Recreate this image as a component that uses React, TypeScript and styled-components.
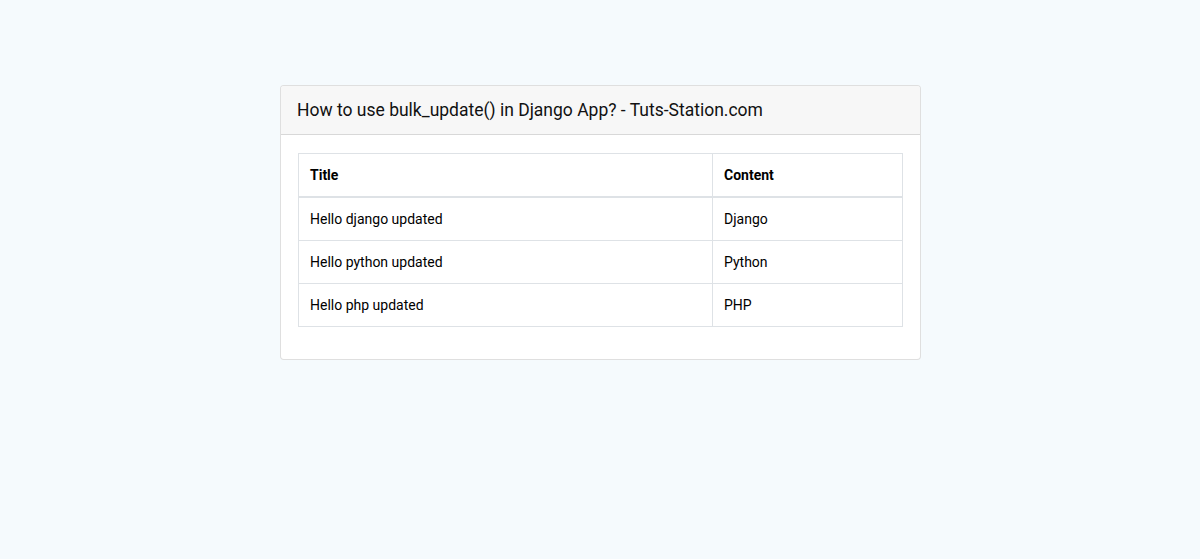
import React from "react";
import styled, { createGlobalStyle } from "styled-components";

const Global = createGlobalStyle`
  html, body { margin: 0; padding: 0; }
  body {
    background: #f5fafd;
    font-family: Roboto, "Liberation Sans", Arial, sans-serif;
    color: #000;
    min-height: 559px;
  }
`;

const Page = styled.div`
  display: flex;
  justify-content: center;
  padding-top: 85px;
  padding-left: 1px;
`;

const Card = styled.div`
  width: 641px;
  box-sizing: border-box;
  background: #fff;
  border: 1px solid rgba(0, 0, 0, 0.125);
  border-radius: 4px;
  display: flex;
  flex-direction: column;
`;

const CardHeader = styled.div`
  background: #f7f7f7;
  border-bottom: 1px solid rgba(0, 0, 0, 0.125);
  padding: 0 16px;
  height: 48px;
  display: flex;
  align-items: center;
  font-size: 17.5px;
  color: #111;
  border-radius: 3px 3px 0 0;
`;

const CardBody = styled.div`
  padding: 18px 17px 32px;
`;

const Table = styled.table`
  width: 100%;
  border-collapse: collapse;
  font-size: 14px;
  color: #000;
  table-layout: fixed;
`;

const Th = styled.th<{ $w?: string }>`
  box-sizing: border-box;
  text-align: left;
  font-weight: 700;
  padding: 11px 11px;
  line-height: 20px;
  border: 1px solid #dee2e6;
  border-bottom: 2px solid #dee2e6;
  width: ${(p) => p.$w || "auto"};
`;

const Td = styled.td`
  padding: 11px 11px;
  line-height: 20px;
  border: 1px solid #dee2e6;
`;

const rows = [
  ["Hello django updated", "Django"],
  ["Hello python updated", "Python"],
  ["Hello php updated", "PHP"],
];

export default function App() {
  return (
    <>
      <Global />
      <Page>
        <Card>
          <CardHeader>How to use bulk_update() in Django App? - Tuts-Station.com</CardHeader>
          <CardBody>
            <Table>
              <thead>
                <tr>
                  <Th $w="414px">Title</Th>
                  <Th>Content</Th>
                </tr>
              </thead>
              <tbody>
                {rows.map(([t, c]) => (
                  <tr key={t}>
                    <Td>{t}</Td>
                    <Td>{c}</Td>
                  </tr>
                ))}
              </tbody>
            </Table>
          </CardBody>
        </Card>
      </Page>
    </>
  );
}
